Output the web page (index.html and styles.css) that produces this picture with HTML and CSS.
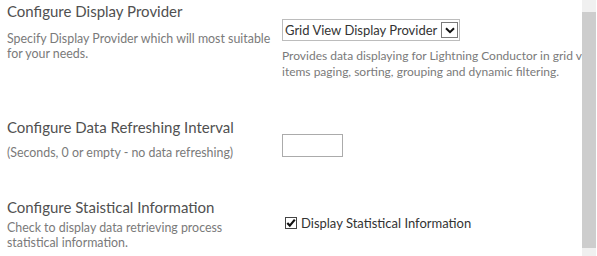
FILE: index.html
```html
<!DOCTYPE html>
<html>
<head>
<meta charset="utf-8">
<link rel="stylesheet" href="styles.css">
</head>
<body>
<div class="page">
  <div class="content">
    <section class="row row-provider">
      <div class="left">
        <div class="title">Configure Display Provider</div>
        <div class="desc">Specify Display Provider which will most suitable for your needs.</div>
      </div>
      <div class="right">
        <div class="select">
          <span class="select-text">Grid View Display Provider</span>
          <span class="select-btn">
            <svg width="10" height="7" viewBox="0 0 10 7"><path d="M1 1.2 L5 5.2 L9 1.2" fill="none" stroke="#111" stroke-width="2"/></svg>
          </span>
        </div>
        <div class="note">Provides data displaying for Lightning Conductor in grid view with<br>items paging, sorting, grouping and dynamic filtering.</div>
      </div>
    </section>
    <section class="row row-interval">
      <div class="left">
        <div class="title">Configure Data Refreshing Interval</div>
        <div class="desc">(Seconds, 0 or empty - no data refreshing)</div>
      </div>
      <div class="right">
        <div class="textbox"></div>
      </div>
    </section>
    <section class="row row-stats">
      <div class="left">
        <div class="title">Configure Staistical Information</div>
        <div class="desc">Check to display data retrieving process statistical information.</div>
      </div>
      <div class="right">
        <label class="check">
          <span class="check-box">
            <svg width="10" height="10" viewBox="0 0 10 10"><path d="M1.3 5 L3.8 7.6 L8.8 1.6" fill="none" stroke="#111" stroke-width="2.2"/></svg>
          </span>
          <span class="check-label">Display Statistical Information</span>
        </label>
      </div>
    </section>
  </div>
  <div class="scrollbar"><div class="thumb"></div></div>
</div>
</body>
</html>
```
FILE: styles.css
```css
html, body {
  margin: 0;
  padding: 0;
  background: #fff;
}
body {
  font-family: Lato, "Open Sans", sans-serif;
  color: #444;
}
.page {
  display: flex;
  width: 597px;
  height: 256px;
}
.content {
  flex: 1;
  overflow: hidden;
  padding-left: 7px;
}
.row {
  display: grid;
  grid-template-columns: 275px 340px;
  box-sizing: border-box;
  padding-top: 2px;
}
.row-provider { height: 116px; }
.row-interval { height: 80px; }

.title {
  font-size: 15px;
  line-height: 18px;
  color: #505050;
  white-space: nowrap;
}
.desc {
  font-size: 12.4px;
  line-height: 15px;
  color: #7a7a7a;
  margin-top: 11px;
  width: 268px;
}
.row-interval .desc { margin-top: 9px; }
.row-stats .desc { margin-top: 4px; width: 230px; }

.select {
  display: flex;
  align-items: center;
  width: 174px;
  height: 20px;
  border: 1px solid #bcbcbc;
  margin-top: 17px;
  padding-left: 2px;
}
.select-text {
  flex: 1;
  font-size: 13px;
  color: #333;
  white-space: nowrap;
}
.select-btn {
  width: 15px;
  height: 14px;
  border: 1px solid #7a7a7a;
  margin-right: 1px;
  display: flex;
  align-items: center;
  justify-content: center;
  background: #fff;
}
.note {
  font-size: 12px;
  line-height: 16px;
  color: #7a7a7a;
  margin-top: 7px;
  white-space: nowrap;
}
.textbox {
  width: 59px;
  height: 21px;
  border: 1px solid #ababab;
  margin-top: 16px;
}
.check {
  display: flex;
  align-items: center;
  margin-top: 17px;
  margin-left: 3px;
}
.check-box {
  width: 10px;
  height: 10px;
  border: 1px solid #444;
  display: flex;
  align-items: center;
  justify-content: center;
  background: #fff;
}
.check-label {
  font-size: 13px;
  color: #333;
  margin-left: 4px;
  white-space: nowrap;
}
.scrollbar {
  width: 14px;
  margin-right: 1px;
  background: #f0f0f0;
  display: flex;
  flex-direction: column;
  padding: 12px 0 8px;
  box-sizing: border-box;
}
.thumb {
  flex: 1;
  background: #cdcdcd;
}
```
